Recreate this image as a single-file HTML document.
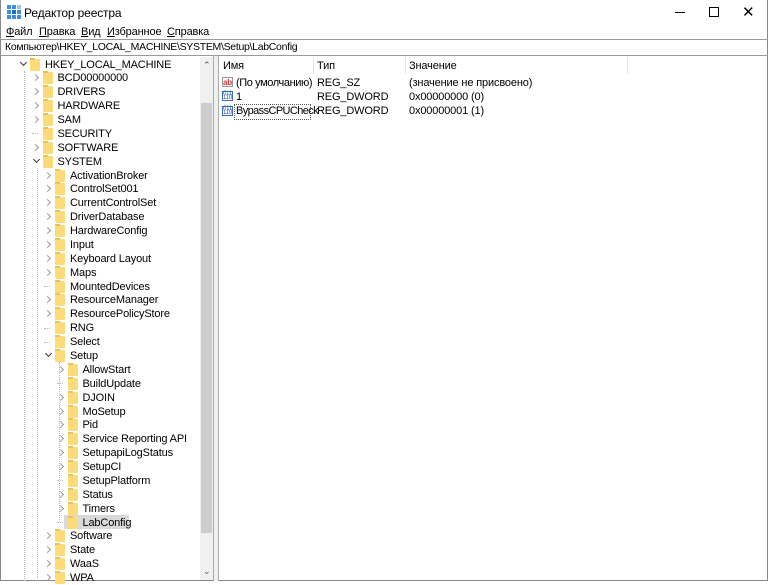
<!DOCTYPE html>
<html><head><meta charset="utf-8"><style>
body{margin:0;width:768px;height:581px;overflow:hidden;background:#fff;font-family:"Liberation Sans","DejaVu Sans",sans-serif;font-size:11px;letter-spacing:-0.15px;color:#000;position:relative}
.a{position:absolute;white-space:nowrap}
.row{position:absolute;height:14px;line-height:14px}
.fold{position:absolute;width:10px;height:12px;background:#fcdb78;border-radius:1px}
.fold:before{content:"";position:absolute;left:0;top:-1px;width:5px;height:2px;background:#eac257}
.arr{position:absolute;width:4px;height:4px;border-right:1px solid #999;border-bottom:1px solid #999;transform:rotate(-45deg)}
.arrd{position:absolute;width:4px;height:4px;border-right:1px solid #333;border-bottom:1px solid #333;transform:rotate(45deg)}
.dv{position:absolute;border-left:1px dotted #bbb}
.dh{position:absolute;border-top:1px dotted #bbb;width:6px}
</style></head><body>
<div style="position:absolute;left:0;top:0;border:1px solid #888;border-top:none;box-sizing:border-box;width:768px;height:581px"></div>
<svg class="a" style="left:7px;top:5px" width="14" height="14"><rect x="0" y="0" width="4" height="4" fill="#3c8fd8"/><rect x="5" y="0" width="4" height="4" fill="#3c8fd8"/><rect x="0" y="5" width="4" height="4" fill="#3c8fd8"/><rect x="5" y="5" width="4" height="4" fill="#1e6fbf"/><rect x="10" y="5" width="4" height="4" fill="#3c8fd8"/><rect x="0" y="10" width="4" height="4" fill="#3c8fd8"/><rect x="5" y="10" width="4" height="4" fill="#3c8fd8"/><rect x="10" y="10" width="4" height="4" fill="#3c8fd8"/><rect x="10" y="0" width="4" height="4" fill="#9cc8ef"/></svg>
<div class="a" style="left:24px;top:6px;font-size:12px">Редактор реестра</div>
<div class="a" style="left:675px;top:12px;width:10px;border-top:1px solid #000"></div>
<div class="a" style="left:709px;top:7px;width:8px;height:8px;border:1px solid #000"></div>
<div class="a" style="left:742px;top:3px;font-size:15px">✕</div>
<div class="a" style="left:6px;top:26px"><u>Ф</u>айл</div>
<div class="a" style="left:39px;top:26px"><u>П</u>равка</div>
<div class="a" style="left:81px;top:26px"><u>В</u>ид</div>
<div class="a" style="left:107px;top:26px"><u>И</u>збранное</div>
<div class="a" style="left:167px;top:26px"><u>С</u>правка</div>
<div class="a" style="left:0;top:39px;width:768px;height:17px;border-top:1px solid #999;border-bottom:1px solid #999;box-sizing:border-box"></div>
<div class="a" style="left:5px;top:41px;font-size:10.5px;letter-spacing:-0.3px">Компьютер\HKEY_LOCAL_MACHINE\SYSTEM\Setup\LabConfig</div>
<div class="a" style="left:0;top:56px;width:214px;height:525px;border-right:1px solid #aaa;box-sizing:border-box"></div>
<div class="a" style="left:218px;top:56px;width:550px;height:525px;border-left:1px solid #aaa;box-sizing:border-box"></div>
<div class="a" style="left:214px;top:56px;width:4px;height:525px;background:#f0f0f0"></div>
<div class="a" style="left:200px;top:57px;width:13px;height:523px;background:#f0f0f0"></div>
<div class="a" style="left:201px;top:103px;width:11px;height:430px;background:#cdcdcd"></div>
<div class="a" style="left:203px;top:60px;font-size:9px;color:#555">&#8963;</div>
<div class="a" style="left:203px;top:566px;font-size:9px;color:#555">&#8964;</div>
<div class="a" style="left:223px;top:60px">Имя</div>
<div class="a" style="left:317px;top:60px">Тип</div>
<div class="a" style="left:409px;top:60px">Значение</div>
<div class="a" style="left:313px;top:57px;height:17px;border-left:1px solid #e5e5e5"></div>
<div class="a" style="left:405px;top:57px;height:17px;border-left:1px solid #e5e5e5"></div>
<div class="a" style="left:627px;top:57px;height:17px;border-left:1px solid #e5e5e5"></div>
<div class="a" style="left:222px;top:77px;width:11px;height:10px;border:1px solid #999;font-size:8px;line-height:9px;color:#c33;font-weight:bold;text-align:center;box-sizing:border-box">ab</div>
<div class="a" style="left:236px;top:77px;letter-spacing:-0.4px">(По умолчанию)</div><div class="a" style="left:317px;top:77px">REG_SZ</div><div class="a" style="left:409px;top:77px">(значение не присвоено)</div>
<div class="a" style="left:222px;top:91px;width:11px;height:10px;border:1px solid #3a6fc0;font-size:6px;line-height:4px;color:#2050a0;box-sizing:border-box">011<br>110</div>
<div class="a" style="left:236px;top:91px">1</div><div class="a" style="left:317px;top:91px">REG_DWORD</div><div class="a" style="left:409px;top:91px">0x00000000 (0)</div>
<div class="a" style="left:222px;top:106px;width:11px;height:10px;border:1px solid #3a6fc0;font-size:6px;line-height:4px;color:#2050a0;box-sizing:border-box">011<br>110</div>
<div class="a" style="left:234px;top:104px;width:77px;height:16px;border:1px dotted #555;box-sizing:border-box"></div>
<div class="a" style="left:236px;top:105px;letter-spacing:-0.6px">BypassCPUCheck</div><div class="a" style="left:317px;top:105px">REG_DWORD</div><div class="a" style="left:409px;top:105px">0x00000001 (1)</div>
<div class="dv" style="left:24px;top:71px;height:510px"></div>
<div class="dv" style="left:37px;top:168px;height:413px"></div>
<div class="dv" style="left:59px;top:362px;height:160px"></div>
<div class="a" style="left:64px;top:515px;width:65px;height:14px;background:#d9d9d9"></div>
<div id="t"></div>
<script>
var items=[[0,"HKEY_LOCAL_MACHINE",2],[1,"BCD00000000",1],[1,"DRIVERS",1],[1,"HARDWARE",1],[1,"SAM",1],[1,"SECURITY",0],[1,"SOFTWARE",1],[1,"SYSTEM",2],
[2,"ActivationBroker",1],[2,"ControlSet001",1],[2,"CurrentControlSet",1],[2,"DriverDatabase",1],[2,"HardwareConfig",1],[2,"Input",1],[2,"Keyboard Layout",1],[2,"Maps",1],[2,"MountedDevices",0],[2,"ResourceManager",1],[2,"ResourcePolicyStore",1],[2,"RNG",0],[2,"Select",0],[2,"Setup",2],
[3,"AllowStart",1],[3,"BuildUpdate",0],[3,"DJOIN",1],[3,"MoSetup",1],[3,"Pid",1],[3,"Service Reporting API",1],[3,"SetupapiLogStatus",1],[3,"SetupCI",1],[3,"SetupPlatform",0],[3,"Status",1],[3,"Timers",1],[3,"LabConfig",0],
[2,"Software",1],[2,"State",1],[2,"WaaS",1],[2,"WPA",1]];
var h="";
items.forEach(function(it,i){var y=57+i*13.88;var l=it[0],x=20+l*12.5;
if(it[2]==1)h+='<div class="arr" style="left:'+(x)+'px;top:'+(y+4.5)+'px"></div>';
else if(it[2]==2)h+='<div class="arrd" style="left:'+(x+1)+'px;top:'+(y+3)+'px"></div>';
else h+='<div class="dh" style="left:'+(x-1)+'px;top:'+(y+7)+'px"></div>';
h+='<div class="fold" style="left:'+(x+10)+'px;top:'+(y+1.5)+'px"></div>';
h+='<div class="row" style="left:'+(x+25)+'px;top:'+(y+0.5)+'px">'+it[1]+'</div>';});
document.getElementById("t").innerHTML=h;
</script>
</body></html>
